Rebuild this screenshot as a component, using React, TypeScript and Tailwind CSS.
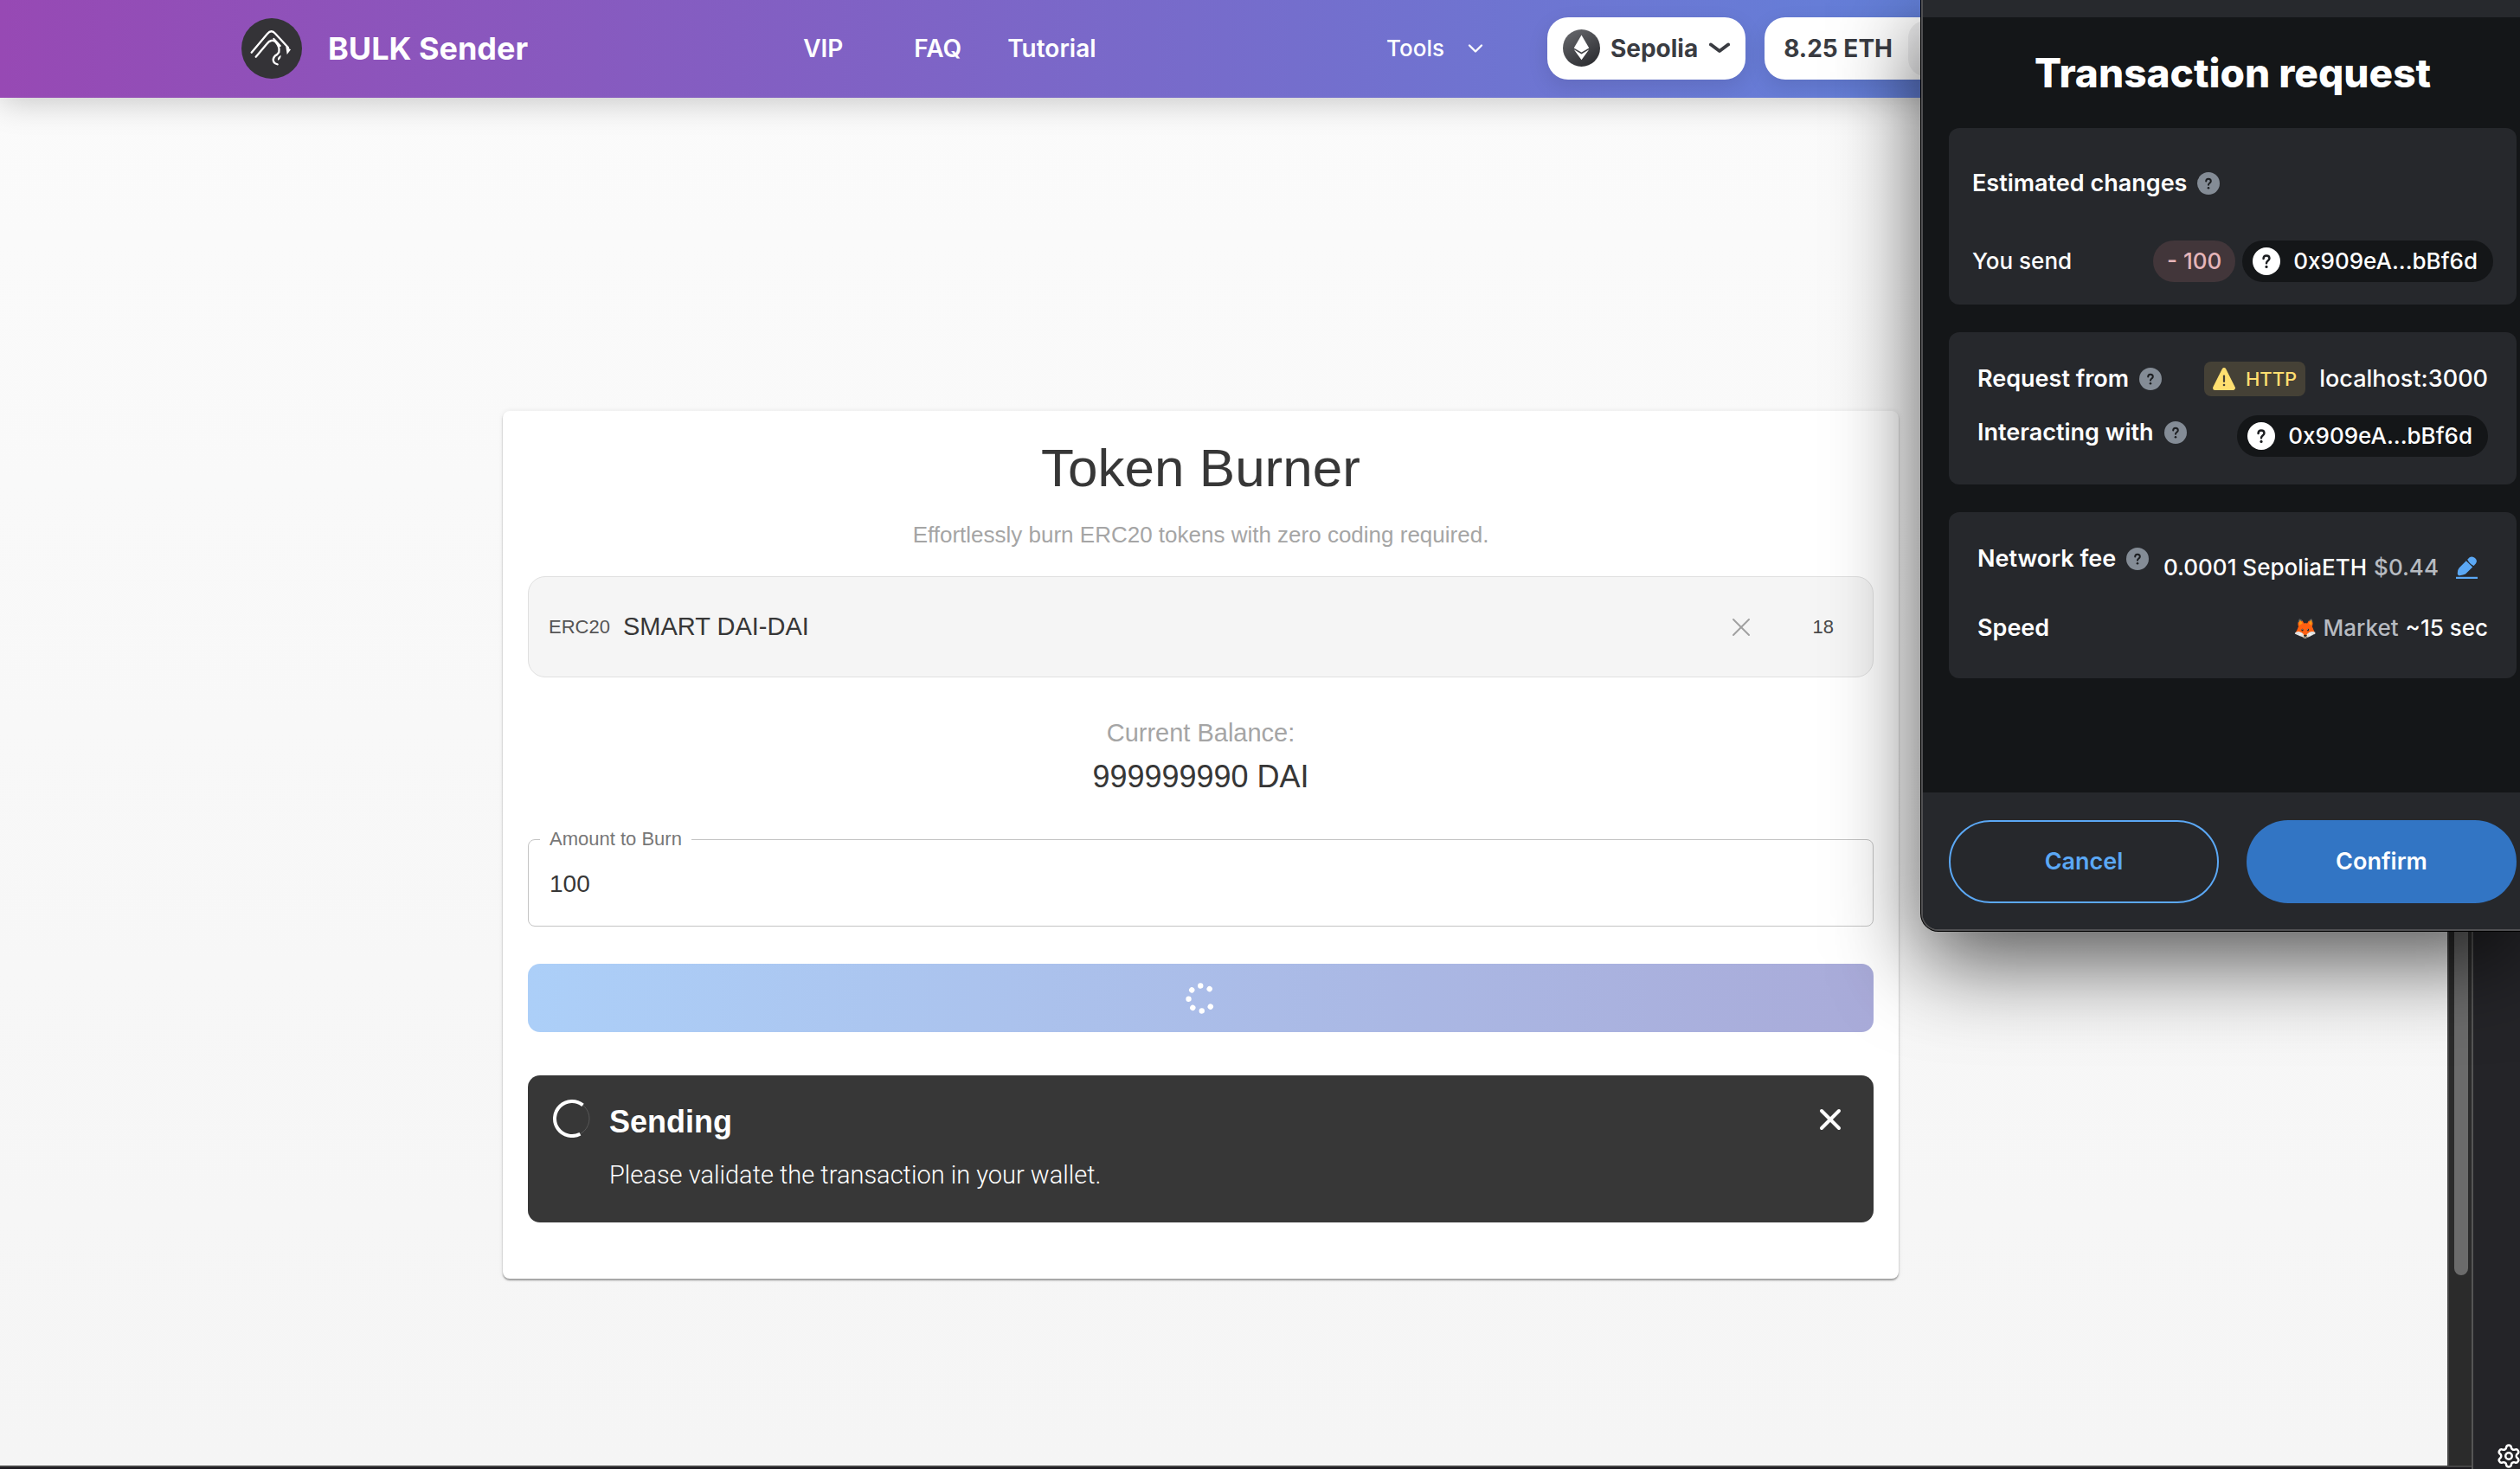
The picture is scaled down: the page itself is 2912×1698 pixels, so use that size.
import { ChevronDown, Settings, X } from "lucide-react";
import type { ReactNode } from "react";

const Logo = () => (
  <svg viewBox="0 0 210 210" className="size-[70px] shrink-0" aria-hidden="true">
    <circle cx="105" cy="105" r="105" fill="#343337" />
    <g fill="none" stroke="#fff" strokeWidth="7" strokeLinecap="round" strokeLinejoin="round">
      <path d="M35 119 90 54Q104 38 117 53L162 102" />
      <path d="M50 134 88 89Q103 70 119 83Q134 100 130 118Q125 126 117 130Q107 140 112 152Q116 159 125 160" />
      <path d="M112 72 134 96" />
    </g>
    <path d="M154 98 171 109 158 126Z" fill="#fff" />
    <path d="M137 128Q137 142 126 146Q124 134 137 128Z" fill="#fff" />
  </svg>
);

const EthIcon = () => (
  <svg viewBox="0 0 28 28" className="size-[43px]" aria-hidden="true">
    <defs>
      <linearGradient id="eth" x1="0" y1="0" x2="0.6" y2="1">
        <stop offset="0" stopColor="#6b6c70" />
        <stop offset="1" stopColor="#2f3034" />
      </linearGradient>
    </defs>
    <circle cx="14" cy="14" r="14" fill="url(#eth)" />
    <path d="M14 4.3 8.3 14 14 17.3 19.7 14Z" fill="#fff" />
    <path d="M8.3 15.2 14 18.5 19.7 15.2 14 23Z" fill="#fff" />
  </svg>
);

const HelpIcon = ({ className }: { className: string }) => (
  <svg viewBox="0 0 26 26" className={`shrink-0 ${className}`} aria-hidden="true">
    <circle cx="13" cy="13" r="13" fill="currentColor" />
    <path d="M10.2 10.6C10.2 8.9 11.4 7.8 13 7.8S15.8 8.9 15.8 10.4C15.8 12.4 13 12.5 13 14.8" fill="none" stroke="#1c1e21" strokeWidth="2" strokeLinecap="round" />
    <circle cx="13" cy="18.2" r="1.3" fill="#1c1e21" />
  </svg>
);

const WarningIcon = () => (
  <svg viewBox="0 0 26 26" className="size-[26px]" aria-hidden="true">
    <path d="M13 2.6 23.4 23.4H2.6Z" fill="#ffdf70" stroke="#ffdf70" strokeWidth="5" strokeLinejoin="round" />
    <path d="M13 9.5V16" stroke="#454136" strokeWidth="2.2" strokeLinecap="round" />
    <circle cx="13" cy="20" r="1.3" fill="#454136" />
  </svg>
);

const EditIcon = () => (
  <svg viewBox="0 0 25 26" className="h-[26px] w-[25px]" aria-hidden="true">
    <path d="M11.8 5.2 19.2 12.4 11 20.6Q8.6 22 4.4 22.2Q1.6 22.2 1.8 19.4Q2 15 3.6 13.4Z" fill="#5ba8f5" />
    <path d="M13.2 3.8 15.4 1.6Q18.6-1 22 2T22.8 8.6L20.6 11Q15.6 9 13.2 3.8Z" fill="#5ba8f5" />
    <path d="M0 24.9H25" stroke="#5ba8f5" strokeWidth="2.2" />
  </svg>
);

const DotSpinner = () => (
  <svg viewBox="0 0 36 36" className="size-[36px]" aria-hidden="true" fill="#fff">
    {[-3, 42, 132, 177, 222, 267, 312].map((deg) => (
      <circle key={deg} cx="18" cy="3.5" r="3.2" transform={`rotate(${deg} 18 18)`} />
    ))}
  </svg>
);

const RingSpinner = () => (
  <svg viewBox="0 0 44 44" className="size-[44px] shrink-0" aria-hidden="true" fill="none">
    <circle cx="22" cy="22" r="20" stroke="#575757" strokeWidth="1" />
    <path d="M34.5 6.4A20 20 0 1 0 31.4 39.7" stroke="#fff" strokeWidth="4" />
  </svg>
);

const AddressPill = () => (
  <button className="flex h-12 items-center gap-[15px] rounded-full bg-[#141618] pr-[18px] pl-3 text-[26px]">
    <HelpIcon className="size-8 text-white" />
    0x909eA...bBf6d
  </button>
);

const RowLabel = ({ children }: { children: ReactNode }) => (
  <span className="flex h-10 items-center gap-3 font-semibold whitespace-nowrap">
    {children}
    <HelpIcon className="size-[26px] text-[#848c96]" />
  </span>
);

const Header = () => (
  <header className="relative z-10 flex h-[113px] shrink-0 items-center bg-linear-to-r/srgb from-[#9749b4] to-[#558fe3] px-[279px] pb-[2px] text-white shadow-[0_4px_36px_rgba(0,0,0,0.22)]">
    <a href="#home" className="flex items-center gap-[30px] text-[36px] font-bold whitespace-nowrap">
      <Logo />
      BULK Sender
    </a>
    <nav className="ml-[318px] flex items-center text-[28px] font-semibold">
      <a href="#vip" className="mr-[82px]">VIP</a>
      <a href="#faq" className="mr-[53px]">FAQ</a>
      <a href="#tutorial">Tutorial</a>
    </nav>
    <div className="ml-auto flex items-center">
      <button className="mr-[69px] flex items-center gap-[22px] text-[26px] font-medium">
        Tools
        <ChevronDown className="size-7" strokeWidth={2} />
      </button>
      <button className="mr-[22px] flex h-[72px] items-center gap-3 rounded-3xl bg-white px-[18px] text-[28px] font-bold text-[#3a3c42] shadow-[0_8px_24px_rgba(0,0,0,0.1)]">
        <EthIcon />
        Sepolia
        <svg viewBox="0 0 24 13" className="ml-px w-6" aria-hidden="true">
          <path d="M2 2.5 12 10 22 2.5" fill="none" stroke="currentColor" strokeWidth="4" strokeLinecap="round" strokeLinejoin="round" />
        </svg>
      </button>
      <button className="flex h-[72px] items-center gap-[18px] rounded-3xl bg-white pl-[22px] text-[28px] font-bold text-[#3a3c42] shadow-[0_8px_24px_rgba(0,0,0,0.1)]">
        8.25 ETH
        <span className="h-16 w-[344px] rounded-[20px] bg-[#f0f0f1]" />
      </button>
    </div>
  </header>
);

const TokenBurner = () => (
  <section className="flex flex-col rounded-lg bg-white px-[29px] pt-[26px] pb-[65px] font-['Liberation_Sans',Arial,sans-serif] text-[#373737] shadow-[0_2px_2px_rgba(0,0,0,0.35),0_0_6px_rgba(0,0,0,0.08)]">
    <h1 className="text-center text-[62px] leading-[80px]">Token Burner</h1>
    <p className="mt-[19px] text-center text-[26px] leading-9 text-[#a5a5a5]">
      Effortlessly burn ERC20 tokens with zero coding required.
    </p>
    <div className="mt-[30px] flex h-[117px] items-center rounded-[20px] border border-[#e0e0e0] bg-[#f5f5f5] pr-[45px] pl-[23px]">
      <span className="w-[86px] text-[22px] text-[#555]">ERC20</span>
      <span className="flex-1 text-[29px]">SMART DAI-DAI</span>
      <button aria-label="Clear token" className="mr-[65px] text-[#a0a0a0]">
        <X className="size-9" strokeWidth={1.3} />
      </button>
      <span className="text-[22px] text-[#4a4a4a]">18</span>
    </div>
    <p className="mt-11 text-center text-[29px] leading-10 text-[#a5a5a5]">Current Balance:</p>
    <p className="mt-[6px] text-center text-[36px] leading-[50px]">999999990 DAI</p>
    <fieldset className="mt-[35px] rounded-lg border border-[#c4c4c4]">
      <legend className="ml-[13px] px-[11px] text-[22px] leading-6 text-[#777]">
        <label htmlFor="amount">Amount to Burn</label>
      </legend>
      <input id="amount" defaultValue="100" className="block h-[88px] w-full pb-2 pl-6 text-[28px] outline-none" />
    </fieldset>
    <button aria-label="Burn" className="mt-[43px] flex h-[79px] items-center justify-center rounded-[14px] bg-linear-to-r/srgb from-[#accff8] to-[#a9abd9]">
      <DotSpinner />
    </button>
    <div role="alert" className="mt-[50px] flex items-start rounded-[14px] bg-[#373737] pt-[28px] pr-[30px] pb-[35px] pl-[29px] text-white">
      <RingSpinner />
      <div className="ml-[21px] flex-1 pt-[6px]">
        <h2 className="text-[36px] leading-10 font-bold">Sending</h2>
        <p className="mt-[21px] font-['Roboto',sans-serif] text-[29px] leading-10 font-light">
          Please validate the transaction in your wallet.
        </p>
      </div>
      <button aria-label="Dismiss" className="mt-[3px]">
        <X className="size-10" strokeWidth={2.4} />
      </button>
    </div>
  </section>
);

const WalletPopup = () => (
  <aside className="absolute top-0 right-0 z-20 w-[692px] rounded-bl-[20px] border-b-2 border-l-2 border-[#505052] bg-[#141618] text-[27px] leading-10 font-medium text-white shadow-[0_0_0_1px_#000,0_36px_100px_rgba(0,0,0,0.65)]">
    <div className="h-5 bg-[#27292d]" />
    <h2 className="flex h-32 items-center justify-center pr-1 pl-[30px] text-[46px] font-extrabold">Transaction request</h2>
    <div className="flex flex-col gap-8 pr-1 pb-[132px] pl-[30px]">
      <div className="rounded-xl bg-[#26282c] px-[27px] pt-11 pb-[26px]">
        <RowLabel>Estimated changes</RowLabel>
        <div className="mt-[46px] flex h-12 items-center gap-2">
          <span className="mr-auto text-[26px]">You send</span>
          <span className="flex h-12 items-center rounded-full bg-[#42363a] px-4 text-[26px] text-[#e5b5b9]">- 100</span>
          <AddressPill />
        </div>
      </div>
      <div className="flex flex-col gap-[22px] rounded-xl bg-[#26282c] px-[33px] pt-[34px] pb-8">
        <div className="flex items-center justify-between">
          <RowLabel>Request from</RowLabel>
          <span className="flex items-center gap-4">
            <span className="flex h-10 items-center gap-3 rounded-lg bg-[#454136] px-[10px] text-[22px] text-[#ffdf70]">
              <WarningIcon />
              HTTP
            </span>
            localhost:3000
          </span>
        </div>
        <div className="flex items-start justify-between">
          <RowLabel>Interacting with</RowLabel>
          <AddressPill />
        </div>
      </div>
      <div className="rounded-xl bg-[#26282c] px-[33px] pt-[34px] pb-[38px]">
        <div className="flex items-start justify-between">
          <RowLabel>Network fee</RowLabel>
          <span className="mt-[10px] flex items-center gap-2 pr-3 text-[26px] whitespace-nowrap">
            0.0001 SepoliaETH
            <span className="text-[#b7bbc1]">$0.44</span>
            <button aria-label="Edit fee" className="ml-3">
              <EditIcon />
            </button>
          </span>
        </div>
        <div className="mt-[30px] flex h-10 items-center justify-between">
          <span className="font-semibold">Speed</span>
          <span className="flex items-center gap-2 text-[26px]">
            <span className="text-[22px]">🦊</span>
            <span className="text-[#b7bbc1]">Market</span>
            ~15 sec
          </span>
        </div>
      </div>
    </div>
    <div className="grid grid-cols-2 gap-8 rounded-bl-[18px] bg-[#26282c] pt-8 pr-1 pb-[30px] pl-[30px] font-semibold">
      <button className="h-24 rounded-full border-2 border-[#5ba8f5] text-[#5ba8f5]">Cancel</button>
      <button className="h-24 rounded-full bg-[#3275c4]">Confirm</button>
    </div>
  </aside>
);

export default function App() {
  return (
    <div className="relative flex min-h-screen overflow-hidden bg-[#242428] font-['Inter',sans-serif]">
      <div className="flex flex-1 flex-col border-b-2 border-[#1c1a1f]">
        <div className="flex flex-1 border-b-2 border-[#444]">
          <div className="flex flex-1 flex-col bg-linear-to-b from-[#fbfbfb] to-[#f5f5f5]">
            <Header />
            <main className="pt-[362px] pr-[634px] pl-[581px]">
              <TokenBurner />
            </main>
          </div>
          <div className="w-7 border-l-2 border-[#444] bg-[#2b2b2b] pr-1 pl-[6px]">
            <div className="h-[87%] w-4 rounded-b-full bg-[#6b6b6b]" />
          </div>
        </div>
      </div>
      <div className="flex w-14 flex-col justify-end border-l-2 border-[#555] pl-[26px]">
        <Settings className="size-[30px] shrink-0 text-white" strokeWidth={2} />
      </div>
      <WalletPopup />
    </div>
  );
}
